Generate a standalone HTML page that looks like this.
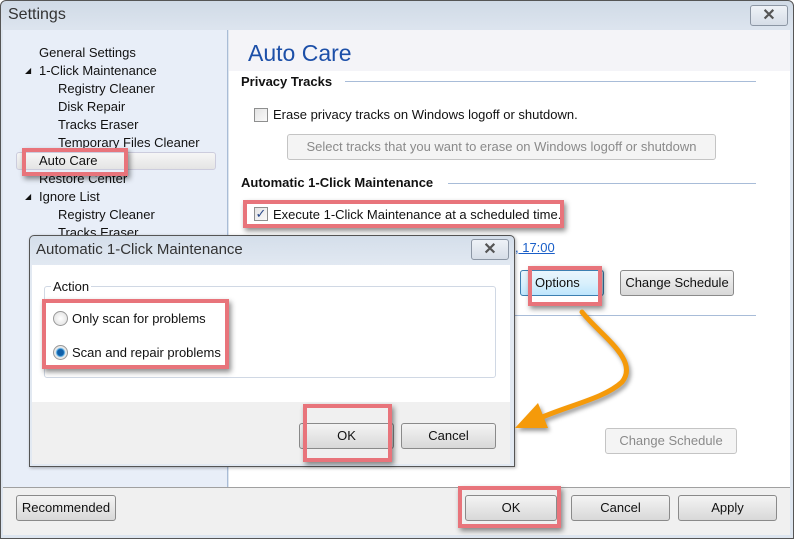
<!DOCTYPE html>
<html><head><meta charset="utf-8"><style>
*{margin:0;padding:0;box-sizing:border-box}
body{width:794px;height:539px;overflow:hidden;font-family:"Liberation Sans",sans-serif;font-size:13px;color:#111;background:#fff;position:relative}
.a{position:absolute;white-space:nowrap}
.btn{position:absolute;border:1px solid #8a8a8a;border-radius:3px;background:linear-gradient(#f4f4f4,#e6e6e6 50%,#d8d8d8);text-align:center;font-size:13px}
.dis{color:#8a8a8a;border-color:#c4c4c4;background:#f4f4f4}
.red{position:absolute;border:4px solid #e8747b;box-shadow:2px 3px 5px rgba(0,0,0,.45)}
.t{position:absolute;white-space:nowrap;line-height:16px}
.close{position:absolute;border:1px solid #8c96a4;border-radius:3px;background:linear-gradient(#eef2f7,#d6dde7);text-align:center;color:#555;font-size:16px;line-height:19px;font-weight:bold}
.line{position:absolute;height:1px;background:#a8bcd8}
.cb{position:absolute;width:14px;height:14px;border:1px solid #8e8f8f;background:linear-gradient(135deg,#e3e3e3,#fafafa)}
</style></head><body>
<div class="a" style="left:0;top:0;width:794px;height:539px;border:1px solid #555;border-radius:6px 6px 0 0;background:linear-gradient(#d0dae6,#dde5ef 30px)"></div>
<div class="a" style="left:8px;top:6px;font-size:16px;color:#333">Settings</div>
<div class="close" style="left:750px;top:5px;width:38px;height:21px">✕</div>
<div class="a" style="left:3px;top:30px;width:225px;height:457px;background:#e8eef8;border-right:1px solid #a9bcd6"></div>
<div class="a" style="left:16px;top:152px;width:200px;height:18px;border:1px solid #ccd;border-radius:3px;background:linear-gradient(#f6f6f6,#e4e4e4)"></div>
<div class="t" style="left:39px;top:45px">General Settings</div>
<div class="t" style="left:25px;top:63px;font-size:8px">◢</div>
<div class="t" style="left:39px;top:63px">1-Click Maintenance</div>
<div class="t" style="left:58px;top:81px">Registry Cleaner</div>
<div class="t" style="left:58px;top:99px">Disk Repair</div>
<div class="t" style="left:58px;top:117px">Tracks Eraser</div>
<div class="t" style="left:58px;top:135px">Temporary Files Cleaner</div>
<div class="t" style="left:39px;top:153px">Auto Care</div>
<div class="t" style="left:39px;top:171px">Restore Center</div>
<div class="t" style="left:25px;top:189px;font-size:8px">◢</div>
<div class="t" style="left:39px;top:189px">Ignore List</div>
<div class="t" style="left:58px;top:207px">Registry Cleaner</div>
<div class="t" style="left:58px;top:225px">Tracks Eraser</div>
<div class="a" style="left:229px;top:30px;width:561px;height:41px;background:#f4f4f8"></div>
<div class="a" style="left:229px;top:71px;width:561px;height:416px;background:#fff"></div>
<div class="a" style="left:248px;top:40px;font-size:23px;color:#1c4fa8">Auto Care</div>
<div class="t" style="left:241px;top:74px;font-weight:bold">Privacy Tracks</div>
<div class="line" style="left:345px;top:81px;width:411px"></div>
<div class="cb" style="left:254px;top:108px"></div>
<div class="t" style="left:273px;top:107px">Erase privacy tracks on Windows logoff or shutdown.</div>
<div class="btn dis" style="left:287px;top:134px;width:429px;height:26px;line-height:24px">Select tracks that you want to erase on Windows logoff or shutdown</div>
<div class="t" style="left:241px;top:175px;font-weight:bold">Automatic 1-Click Maintenance</div>
<div class="line" style="left:448px;top:183px;width:308px"></div>
<div class="cb" style="left:254px;top:207px;color:#2a4a8a;font-size:13px;line-height:12px;text-align:center">✓</div>
<div class="t" style="left:273px;top:207px">Execute 1-Click Maintenance at a scheduled time.</div>
<div class="t" style="left:515px;top:240px;color:#1a5fc8;text-decoration:underline">, 17:00</div>
<div class="btn" style="left:520px;top:270px;width:84px;height:26px;line-height:24px;border-color:#3c7fb1;background:linear-gradient(#eaf6fd,#d9f0fc 50%,#bee6fd);text-align:left;padding-left:14px">Options</div>
<div class="btn" style="left:620px;top:270px;width:114px;height:26px;line-height:24px">Change Schedule</div>
<div class="line" style="left:514px;top:315px;width:242px"></div>
<div class="btn dis" style="left:605px;top:428px;width:132px;height:26px;line-height:24px">Change Schedule</div>
<div class="a" style="left:3px;top:487px;width:787px;height:48px;background:#f0f0f0;border-top:1px solid #a0a0a0"></div>
<div class="btn" style="left:16px;top:495px;width:100px;height:26px;line-height:24px">Recommended</div>
<div class="btn" style="left:465px;top:495px;width:92px;height:26px;line-height:24px">OK</div>
<div class="btn" style="left:571px;top:495px;width:99px;height:26px;line-height:24px">Cancel</div>
<div class="btn" style="left:678px;top:495px;width:99px;height:26px;line-height:24px">Apply</div>
<div class="a" style="left:29px;top:235px;width:486px;height:232px;border:1px solid #555;border-radius:5px 5px 0 0;background:linear-gradient(#d4deea,#e2e9f2 30px);box-shadow:1px 1px 3px rgba(0,0,0,.3)"></div>
<div class="a" style="left:36px;top:241px;font-size:15px;color:#333">Automatic 1-Click Maintenance</div>
<div class="close" style="left:471px;top:239px;width:38px;height:21px">✕</div>
<div class="a" style="left:32px;top:265px;width:478px;height:137px;background:#fff"></div>
<div class="a" style="left:32px;top:402px;width:478px;height:62px;background:#f0f0f0"></div>
<div class="a" style="left:44px;top:286px;width:452px;height:92px;border:1px solid #d0d8e4;border-radius:3px"></div>
<div class="t" style="left:51px;top:279px;background:#fff;padding:0 2px">Action</div>
<div class="a" style="left:53px;top:311px;width:15px;height:15px;border-radius:50%;border:1px solid #999;background:radial-gradient(#fff,#ddd)"></div>
<div class="t" style="left:72px;top:311px">Only scan for problems</div>
<div class="a" style="left:53px;top:345px;width:15px;height:15px;border-radius:50%;border:1px solid #999;background:radial-gradient(#0f5fa8 3px,#5ab0e8 4px,#e8e8e8 5px)"></div>
<div class="t" style="left:72px;top:345px">Scan and repair problems</div>
<div class="btn" style="left:299px;top:423px;width:95px;height:26px;line-height:24px">OK</div>
<div class="btn" style="left:401px;top:423px;width:95px;height:26px;line-height:24px">Cancel</div>
<div class="red" style="left:22px;top:148px;width:106px;height:28px"></div>
<div class="red" style="left:243px;top:200px;width:321px;height:28px"></div>
<div class="red" style="left:528px;top:266px;width:74px;height:40px"></div>
<div class="red" style="left:42px;top:299px;width:187px;height:70px"></div>
<div class="red" style="left:303px;top:404px;width:89px;height:58px"></div>
<div class="red" style="left:458px;top:486px;width:103px;height:42px"></div>
<svg class="a" style="left:0;top:0" width="794" height="539"><g style="filter:drop-shadow(2px 3px 2px rgba(0,0,0,.4))">
<path d="M582 312 C600 335 640 360 622 382 C605 398 570 405 540 418" fill="none" stroke="#f59a0a" stroke-width="5" stroke-linecap="round"/>
<polygon points="515,428 538,403 548,428" fill="#f59a0a"/></g></svg>
</body></html>
